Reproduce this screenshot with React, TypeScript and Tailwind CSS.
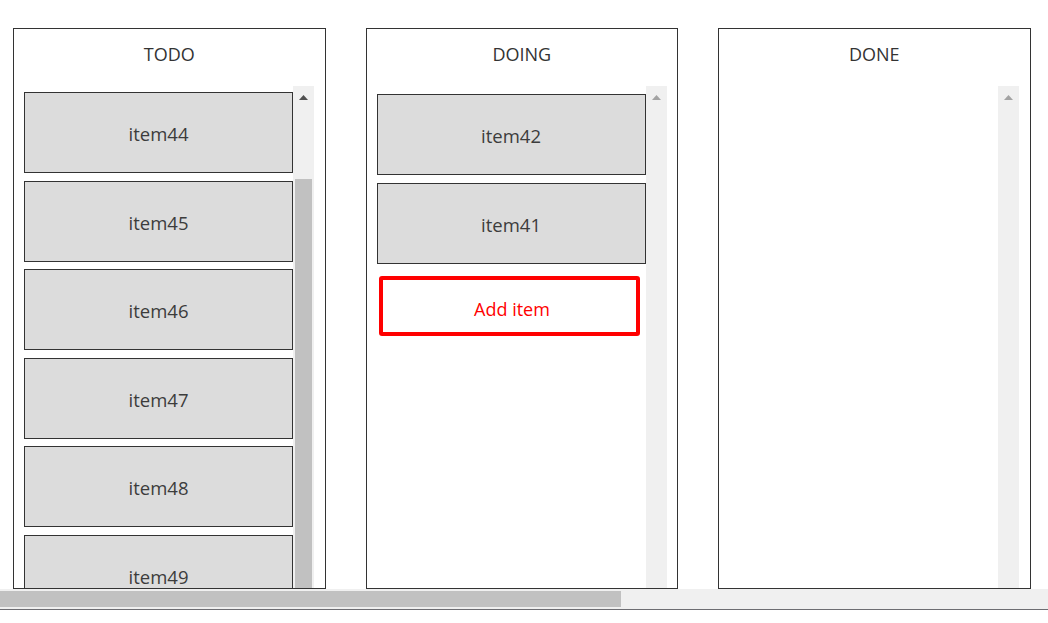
import React from "react";

function Arrow({ enabled }: { enabled: boolean }) {
  return (
    <svg width="9" height="5" viewBox="0 0 9 5" className="block">
      <polygon points="0,5 4.5,0 9,5" fill={enabled ? "#505050" : "#a3a3a3"} />
    </svg>
  );
}

function VScroll({ thumbTop }: { thumbTop?: number }) {
  return (
    <div className="relative w-[21px] shrink-0 bg-[#f0f0f0] h-full">
      <div className="pt-[9px] pl-[6px]">
        <Arrow enabled={thumbTop !== undefined} />
      </div>
      {thumbTop !== undefined && (
        <div
          className="absolute left-[2px] w-[17px] bg-[#c1c1c1] h-[600px]"
          style={{ top: thumbTop }}
        />
      )}
    </div>
  );
}

function Item({ label }: { label: string }) {
  return (
    <div className="h-[81px] shrink-0 border border-[#333333] bg-[#dcdcdc] flex items-center justify-center pt-[3px] text-[18.5px] text-[#3c3c3c]">
      {label}
    </div>
  );
}

function Column({
  title,
  children,
  thumbTop,
  padTop,
}: {
  title: string;
  children?: React.ReactNode;
  thumbTop?: number;
  padTop: number;
}) {
  return (
    <div className="w-[312.5px] h-[561px] shrink-0 border border-[#333333] bg-white overflow-hidden flex flex-col">
      <div className="pt-[13px] h-[37px] text-center text-[18px] leading-[25px] text-[#333333]">
        {title}
      </div>
      <div className="mt-[20px] ml-[10px] w-[290px] h-[700px] flex">
        <div className="w-[269px] flex flex-col" style={{ paddingTop: padTop }}>
          {children}
        </div>
        <VScroll thumbTop={thumbTop} />
      </div>
    </div>
  );
}

export default function App() {
  return (
    <div
      className="w-[1048px] h-[623px] bg-white overflow-hidden"
      style={{ fontFamily: '"Open Sans", "Noto Sans", sans-serif' }}
    >
      <div className="h-[589px] flex gap-[40px] pl-[13px] pt-[28px] overflow-hidden">
        <Column title="TODO" thumbTop={93} padTop={6}>
          <div className="flex flex-col gap-[7.5px]">
            <Item label="item44" />
            <Item label="item45" />
            <Item label="item46" />
            <Item label="item47" />
            <Item label="item48" />
            <Item label="item49" />
          </div>
        </Column>
        <Column title="DOING" padTop={8}>
          <div className="flex flex-col gap-[8px]">
            <Item label="item42" />
            <Item label="item41" />
          </div>
          <div className="mt-[12px] ml-[2px] w-[261px] h-[60px] border-[4px] border-[#ff0000] rounded-[3px] bg-white flex items-center justify-center pt-[6px] pl-[6px] text-[18px] text-[#ff0000]">
            Add item
          </div>
        </Column>
        <Column title="DONE" padTop={8} />
      </div>
      <div className="h-[20px] bg-[#f0f0f0] pt-[2px]">
        <div className="w-[621px] h-[16px] bg-[#c1c1c1]" />
      </div>
      <div className="h-[1px] bg-[#6d6d72]" />
    </div>
  );
}
